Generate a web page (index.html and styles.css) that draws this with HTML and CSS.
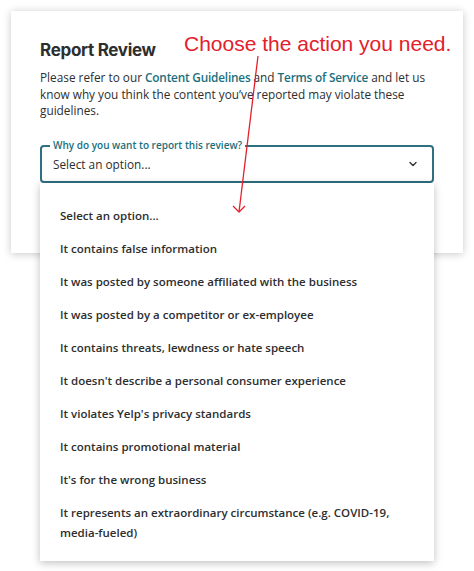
FILE: index.html
```html
<!DOCTYPE html>
<html lang="en">
<head>
<meta charset="utf-8">
<title>Report Review</title>
<link rel="stylesheet" href="styles.css">
</head>
<body>
<div class="page">
  <div class="card">
    <h1 class="title">Report Review</h1>
    <p class="intro">Please refer to our <a class="link" href="#">Content Guidelines</a> and <a class="link" href="#">Terms of Service</a> and let us know why you think the content you’ve reported may violate these guidelines.</p>
    <div class="field">
      <span class="field-label">Why do you want to report this review?</span>
      <div class="select">
        <span class="select-value">Select an option...</span>
        <svg class="chevron" width="8" height="6" viewBox="0 0 8 6"><path d="M1 1.5 L4 4.5 L7 1.5" fill="none" stroke="#333" stroke-width="1.4" stroke-linecap="round" stroke-linejoin="round"/></svg>
      </div>
      <ul class="menu">
        <li class="option">Select an option...</li>
        <li class="option">It contains false information</li>
        <li class="option">It was posted by someone affiliated with the business</li>
        <li class="option">It was posted by a competitor or ex-employee</li>
        <li class="option">It contains threats, lewdness or hate speech</li>
        <li class="option">It doesn't describe a personal consumer experience</li>
        <li class="option">It violates Yelp's privacy standards</li>
        <li class="option">It contains promotional material</li>
        <li class="option">It's for the wrong business</li>
        <li class="option">It represents an extraordinary circumstance (e.g. COVID-19, media-fueled)</li>
      </ul>
    </div>
  </div>
  <div class="note">Choose the action you need.</div>
  <svg class="pointer" width="474" height="571" viewBox="0 0 474 571">
    <path d="M258 56 L239 212" fill="none" stroke="#e3202b" stroke-width="1.3"/>
    <path d="M233 206 L239 212 L245 206" fill="none" stroke="#e3202b" stroke-width="1.3" stroke-linejoin="round"/>
  </svg>
</div>
</body>
</html>
```
FILE: styles.css
```css
html, body {
  margin: 0;
  padding: 0;
  background: #ffffff;
}
body {
  font-family: "Open Sans", "Liberation Sans", sans-serif;
  color: #2d2e2f;
}
.page {
  position: relative;
  width: 474px;
  height: 571px;
  overflow: hidden;
  padding: 11px;
  box-sizing: border-box;
}
.card {
  width: 452px;
  height: 242px;
  box-sizing: border-box;
  padding: 27px 29px 0 29px;
  background: #fff;
  box-shadow: 0 1px 8px rgba(0, 0, 0, 0.22);
}
.title {
  margin: 0;
  font-family: "Inter", "Liberation Sans", sans-serif;
  font-weight: 700;
  font-size: 17px;
  line-height: 24px;
  letter-spacing: -0.3px;
  color: #2d2e2f;
}
.intro {
  margin: 7px 0 0 0;
  font-size: 11.8px;
  line-height: 16.5px;
  color: #2d2e2f;
}
.link {
  color: #1b6f7d;
  text-decoration: none;
  font-weight: 600;
  letter-spacing: -0.2px;
}
.field {
  position: relative;
  margin-top: 26px;
  width: 394px;
}
.field-label {
  position: absolute;
  left: 10px;
  top: -6px;
  padding: 0 3px;
  background: #fff;
  font-size: 10px;
  line-height: 13px;
  font-weight: 600;
  color: #1b6f7d;
}
.select {
  height: 38px;
  box-sizing: border-box;
  border: 2px solid #2e6f80;
  border-radius: 4px;
  display: flex;
  align-items: center;
  justify-content: space-between;
  padding: 1px 15px 0 11px;
}
.select-value {
  font-size: 11.8px;
  color: #2d2e2f;
}
.chevron {
  display: block;
}
.menu {
  position: absolute;
  left: 0;
  top: 100%;
  width: 394px;
  box-sizing: border-box;
  margin: 0;
  padding: 16.5px 20px 11.5px 20px;
  list-style: none;
  background: #fff;
  box-shadow: 0 2px 8px rgba(0, 0, 0, 0.25);
}
.option {
  padding: 6.5px 0;
  font-size: 11.5px;
  line-height: 20px;
  font-weight: 600;
  color: #2d2e2f;
}
.note {
  position: absolute;
  left: 184px;
  top: 32px;
  font-family: "Liberation Sans", Arial, sans-serif;
  font-size: 21px;
  line-height: 24px;
  color: #e3202b;
  white-space: nowrap;
}
.pointer {
  position: absolute;
  left: 0;
  top: 0;
  pointer-events: none;
}
```
